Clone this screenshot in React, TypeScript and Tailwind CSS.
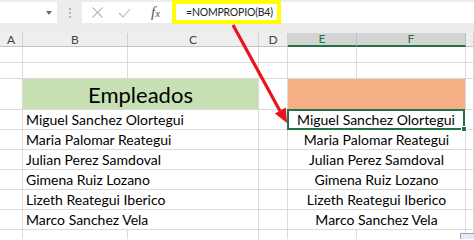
import React from "react";

const names = [
  "Miguel Sanchez Olortegui",
  "Maria Palomar Reategui",
  "Julian Perez Samdoval",
  "Gimena Ruiz Lozano",
  "Lizeth Reategui Iberico",
  "Marco Sanchez Vela",
];

const g = "border-r border-b border-[#dadada]";

function Header() {
  const cols = [
    { l: "A", w: "w-[23px]", sel: false },
    { l: "B", w: "w-[105px]", sel: false },
    { l: "C", w: "w-[131px]", sel: false },
    { l: "D", w: "w-[29px]", sel: false },
    { l: "E", w: "w-[69px]", sel: true },
    { l: "F", w: "w-[109px]", sel: true },
    { l: "", w: "flex-1", sel: false },
  ];
  return (
    <div className="flex h-[14px]">
      {cols.map((c, i) =>
        c.sel ? (
          <div
            key={i}
            className={`${c.w} h-full shrink-0 flex items-center justify-center bg-[#d4d4d4] border-r border-[#bcbcbc] border-b-2 border-b-[#217346] text-[#217346] text-[12px] leading-none`}
          >
            {c.l}
          </div>
        ) : (
          <div
            key={i}
            className={`${c.w} h-full shrink-0 flex items-center justify-center bg-[#eeeeee] border-r border-[#cfcfcf] border-b border-b-[#c2c2c2] text-[#444] text-[12px] leading-none`}
          >
            {c.l}
          </div>
        )
      )}
    </div>
  );
}

function EmptyRow({ h }: { h: string }) {
  return (
    <div className={`flex ${h}`}>
      <div className={`w-[23px] shrink-0 ${g}`} />
      <div className={`w-[105px] shrink-0 ${g}`} />
      <div className={`w-[131px] shrink-0 ${g}`} />
      <div className={`w-[29px] shrink-0 ${g}`} />
      <div className={`w-[69px] shrink-0 ${g}`} />
      <div className={`w-[109px] shrink-0 ${g}`} />
      <div className={`flex-1 ${g}`} />
    </div>
  );
}

export default function App() {
  return (
    <div className="relative w-[474px] h-[239px] overflow-hidden bg-white font-['Lato',sans-serif] text-black">
      {/* toolbar */}
      <div className="h-[33px] bg-[#ececec] pt-[2px] flex items-start">
        <div className="w-[57px] h-[21px] shrink-0 bg-white flex items-center justify-end pr-[5px]">
          <svg width="6" height="4" viewBox="0 0 6 4">
            <path d="M0 0 L6 0 L3 4 Z" fill="#6b6b6b" />
          </svg>
        </div>
        <div className="w-[25px] h-[21px] shrink-0 flex flex-col items-center justify-center gap-[2px]">
          <div className="w-[2px] h-[2px] bg-[#b5b5b5]" />
          <div className="w-[2px] h-[2px] bg-[#b5b5b5]" />
          <div className="w-[2px] h-[2px] bg-[#b5b5b5]" />
        </div>
        <div className="w-[90px] h-[21px] shrink-0 bg-white flex items-center">
          <svg width="11" height="11" viewBox="0 0 11 11" className="ml-[10px]">
            <path d="M0.5 0.5 L10.5 10.5 M10.5 0.5 L0.5 10.5" stroke="#b8b8b8" strokeWidth="1.1" />
          </svg>
          <svg width="13" height="10" viewBox="0 0 13 10" className="ml-[15px]">
            <path d="M1 5 L5 9 L12 1" stroke="#b8b8b8" strokeWidth="1.1" fill="none" />
          </svg>
          <span className="ml-[20px] font-['Liberation_Serif',serif] italic text-[15px] text-[#555] leading-none">
            f<span className="text-[11px]">x</span>
          </span>
        </div>
        <div className="flex-1 h-[21px] bg-white flex items-start">
          <div className="w-[109px] h-[24px] shrink-0 -mt-[2px] border-[4px] border-[#ffff00] bg-white flex items-center pl-[10px] text-[10.5px] tracking-[-0.2px] text-[#222] whitespace-nowrap leading-none overflow-hidden">
            =NOMPROPIO(B4)
          </div>
        </div>
      </div>

      <Header />
      <EmptyRow h="h-[16px]" />
      <EmptyRow h="h-[16px]" />

      {/* row 3 */}
      <div className="flex h-[31px]">
        <div className={`w-[23px] shrink-0 ${g}`} />
        <div className="w-[236px] shrink-0 bg-[#c6e0b4] border-r border-b border-[#dadada] flex items-end justify-center pb-[1px] text-[22px] leading-[27px]">
          Empleados
        </div>
        <div className={`w-[29px] shrink-0 ${g}`} />
        <div className="w-[178px] shrink-0 bg-[#f4b084] border-r border-b border-[#dadada]" />
        <div className={`flex-1 ${g}`} />
      </div>

      {names.map((n, i) => (
        <div key={n} className="flex h-[20px]">
          <div className={`w-[23px] shrink-0 ${g}`} />
          <div className={`w-[236px] shrink-0 ${g} pl-[3px] text-[14px] leading-[20px] whitespace-nowrap`}>
            {n}
          </div>
          <div className={`w-[29px] shrink-0 ${g}`} />
          {i === 0 ? (
            <div className="relative w-[178px] shrink-0 border-2 border-[#217346] -mt-[1px] -ml-[1px] h-[21px] flex items-center justify-center text-[14px] leading-[20px] whitespace-nowrap">
              {n}
              <div className="absolute -right-[4px] -bottom-[4px] w-[6px] h-[6px] bg-[#217346] border border-white" />
            </div>
          ) : (
            <div className={`w-[178px] shrink-0 ${g} text-center text-[14px] leading-[20px] whitespace-nowrap`}>
              {n}
            </div>
          )}
          <div className={`flex-1 ${g}`} />
        </div>
      ))}
      <EmptyRow h="h-[20px]" />

      {/* auto fill options button */}
      <div className="absolute left-[460px] top-[233px] w-[16px] h-[12px] bg-[#e3eaf4] border border-[#8ea6c8]" />

      {/* red arrow annotation */}
      <svg className="absolute left-0 top-0 pointer-events-none" width="474" height="239" viewBox="0 0 474 239">
        <line x1="233" y1="25" x2="280" y2="111" stroke="#e8141b" strokeWidth="3.2" />
        <polygon points="287,123 285.8,107.5 274.8,113.6" fill="#e8141b" />
      </svg>
    </div>
  );
}
